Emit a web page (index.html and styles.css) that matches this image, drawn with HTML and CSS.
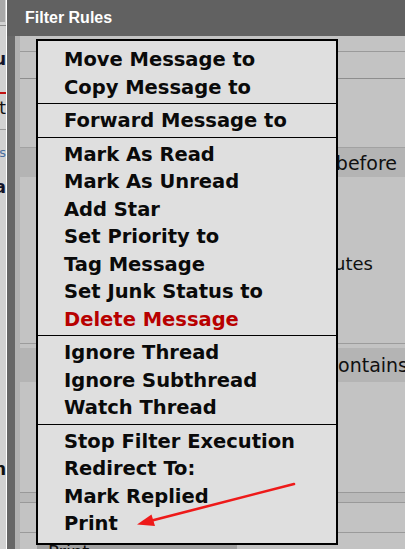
FILE: index.html
```html
<!DOCTYPE html>
<html>
<head>
<meta charset="utf-8">
<link rel="stylesheet" href="styles.css">
</head>
<body>
<div class="screen">
  <aside class="behind">
    <div class="b-icon"></div>
    <div class="b-line"></div>
    <div class="b-frag b-bold">Su</div>
    <div class="b-red"></div>
    <div class="b-frag b-t">st</div>
    <div class="b-line b-line2"></div>
    <div class="b-frag b-blue">ss</div>
    <div class="b-frag b-bold b-a">ka</div>
    <div class="b-frag b-n">In</div>
  </aside>
  <div class="divider"></div>
  <section class="dialog">
    <header class="titlebar">Filter Rules</header>
    <div class="dlg-body">
      <div class="frame">
        <div class="hdr"></div>
        <div class="hdr2"></div>
        <div class="sp1"></div>
        <div class="field f-before"><span>Date is before</span></div>
        <div class="label l-utes"><span>Age in minutes</span></div>
        <div class="line-c"></div>
        <div class="field f-contains"><span>Subject contains</span></div>
        <div class="band-bottom"></div>
        <div class="row-last"></div>
        <div class="row-drop"><div class="dropdown">Print</div></div>
      </div>
    </div>
  </section>

  <div class="menu">
    <div class="group g-first">
      <div class="item">Move Message to</div>
      <div class="item">Copy Message to</div>
    </div>
    <div class="group">
      <div class="item">Forward Message to</div>
    </div>
    <div class="group">
      <div class="item">Mark As Read</div>
      <div class="item">Mark As Unread</div>
      <div class="item">Add Star</div>
      <div class="item">Set Priority to</div>
      <div class="item">Tag Message</div>
      <div class="item">Set Junk Status to</div>
      <div class="item danger">Delete Message</div>
    </div>
    <div class="group">
      <div class="item">Ignore Thread</div>
      <div class="item">Ignore Subthread</div>
      <div class="item">Watch Thread</div>
    </div>
    <div class="group g-last">
      <div class="item">Stop Filter Execution</div>
      <div class="item">Redirect To:</div>
      <div class="item">Mark Replied</div>
      <div class="item">Print</div>
    </div>
  </div>

  <svg class="arrow" viewBox="0 0 405 549" width="405" height="549">
    <line x1="294" y1="484" x2="152" y2="520.5" stroke="#ee1a1a" stroke-width="2.6" stroke-linecap="round"/>
    <polygon points="137,524.5 155,526 151.5,514.5" fill="#ee1a1a"/>
  </svg>
</div>
</body>
</html>
```
FILE: styles.css
```css
html, body {
  margin: 0;
  padding: 0;
  background: #c3c3c3;
}
.screen {
  position: relative;
  width: 405px;
  height: 549px;
  overflow: hidden;
  display: flex;
  flex-direction: row;
  font-family: "DejaVu Sans", Verdana, sans-serif;
}

/* window behind, at the far left */
.behind {
  width: 6px;
  flex: none;
  background: #d2d2d2;
  display: flex;
  flex-direction: column;
  overflow: hidden;
}
.b-icon {
  height: 22px;
  background: #a9a9a9;
  margin-right: 1px;
}
.b-line {
  height: 1px;
  background: #8a8a8a;
  margin-top: 3px;
}
.b-frag {
  font-size: 17px;
  line-height: 18px;
  white-space: nowrap;
  direction: rtl;
  text-align: right;
  color: #111;
  width: 6px;
  overflow: hidden;
}
.b-bold {
  font-weight: bold;
  margin-top: 24px;
  color: #14142a;
}
.b-red {
  height: 2px;
  background: #c21212;
  margin-top: 24px;
}
.b-t {
  margin-top: 5px;
}
.b-line2 {
  margin-top: 12px;
  background: #9a9a9a;
}
.b-blue {
  color: #4a6fa0;
  font-size: 13px;
  margin-top: 14px;
}
.b-a {
  margin-top: 16px;
}
.b-n {
  font-weight: bold;
  margin-top: 264px;
}

.divider {
  width: 1px;
  flex: none;
  background: #ffffff;
}

/* dialog */
.dialog {
  flex: 1;
  display: flex;
  flex-direction: column;
  min-width: 0;
}
.titlebar {
  height: 36px;
  flex: none;
  background: #616161;
  color: #ffffff;
  font-family: "Liberation Sans", Arial, sans-serif;
  font-weight: bold;
  font-size: 16px;
  line-height: 35px;
  padding-left: 18px;
  box-sizing: border-box;
}
.dlg-body {
  flex: 1;
  display: flex;
  border-left: 8px solid #676767;
  min-height: 0;
}
.frame {
  flex: 1;
  border-left: 5px solid #b2b2b2;
  background: #c3c3c3;
  display: flex;
  flex-direction: column;
  min-width: 0;
}
.frame > div {
  flex: none;
}
.hdr {
  height: 15px;
  border-bottom: 1px solid #9a9a9a;
}
.hdr2 {
  height: 26px;
  border-bottom: 1px solid #8e8e8e;
}
.sp1 {
  height: 68px;
}
.field {
  display: flex;
  justify-content: flex-end;
  align-items: center;
  background: #b4b4b4;
  font-size: 19px;
  color: #101010;
  white-space: nowrap;
  overflow: hidden;
}
.f-before {
  height: 29px;
  border-top: 1px solid #a2a2a2;
  padding-right: 8px;
}
.label {
  display: flex;
  justify-content: flex-end;
  align-items: center;
  font-size: 18px;
  color: #101010;
  white-space: nowrap;
  height: 28px;
  margin-top: 72px;
  padding-right: 32px;
}
.line-c {
  height: 1px;
  background: #9c9c9c;
  margin-top: 66px;
}
.f-contains {
  margin-top: 4px;
  height: 34px;
}
.f-contains span {
  margin-right: -3px;
}
.band-bottom {
  margin-top: 110px;
  height: 9px;
  background: #b9b9b9;
  border-top: 1px solid #999;
  border-bottom: 1px solid #999;
}
.row-last {
  height: 29px;
  border-bottom: 1px solid #9a9a9a;
}
.row-drop {
  padding-left: 17px;
  padding-top: 10px;
}
.dropdown {
  width: 200px;
  height: 24px;
  background: #a0a0a0;
  font-size: 18px;
  line-height: 18px;
  padding-left: 11px;
  box-sizing: border-box;
  color: #111;
}

/* popup menu */
.menu {
  position: absolute;
  left: 36px;
  top: 39px;
  width: 302px;
  box-sizing: border-box;
  border: 2px solid #000;
  background: #dfdfdf;
  font-family: "DejaVu Sans", Verdana, sans-serif;
  font-weight: bold;
  font-size: 19.5px;
  color: #0a0a0a;
}
.group {
  padding: 3px 0 2px 26px;
  border-top: 1px solid #000;
}
.g-first {
  border-top: none;
  padding-top: 5px;
}
.g-last {
  padding-bottom: 5px;
}
.item {
  line-height: 27.5px;
  white-space: nowrap;
}
.danger {
  color: #b80000;
}

.arrow {
  position: absolute;
  left: 0;
  top: 0;
  pointer-events: none;
}
```
